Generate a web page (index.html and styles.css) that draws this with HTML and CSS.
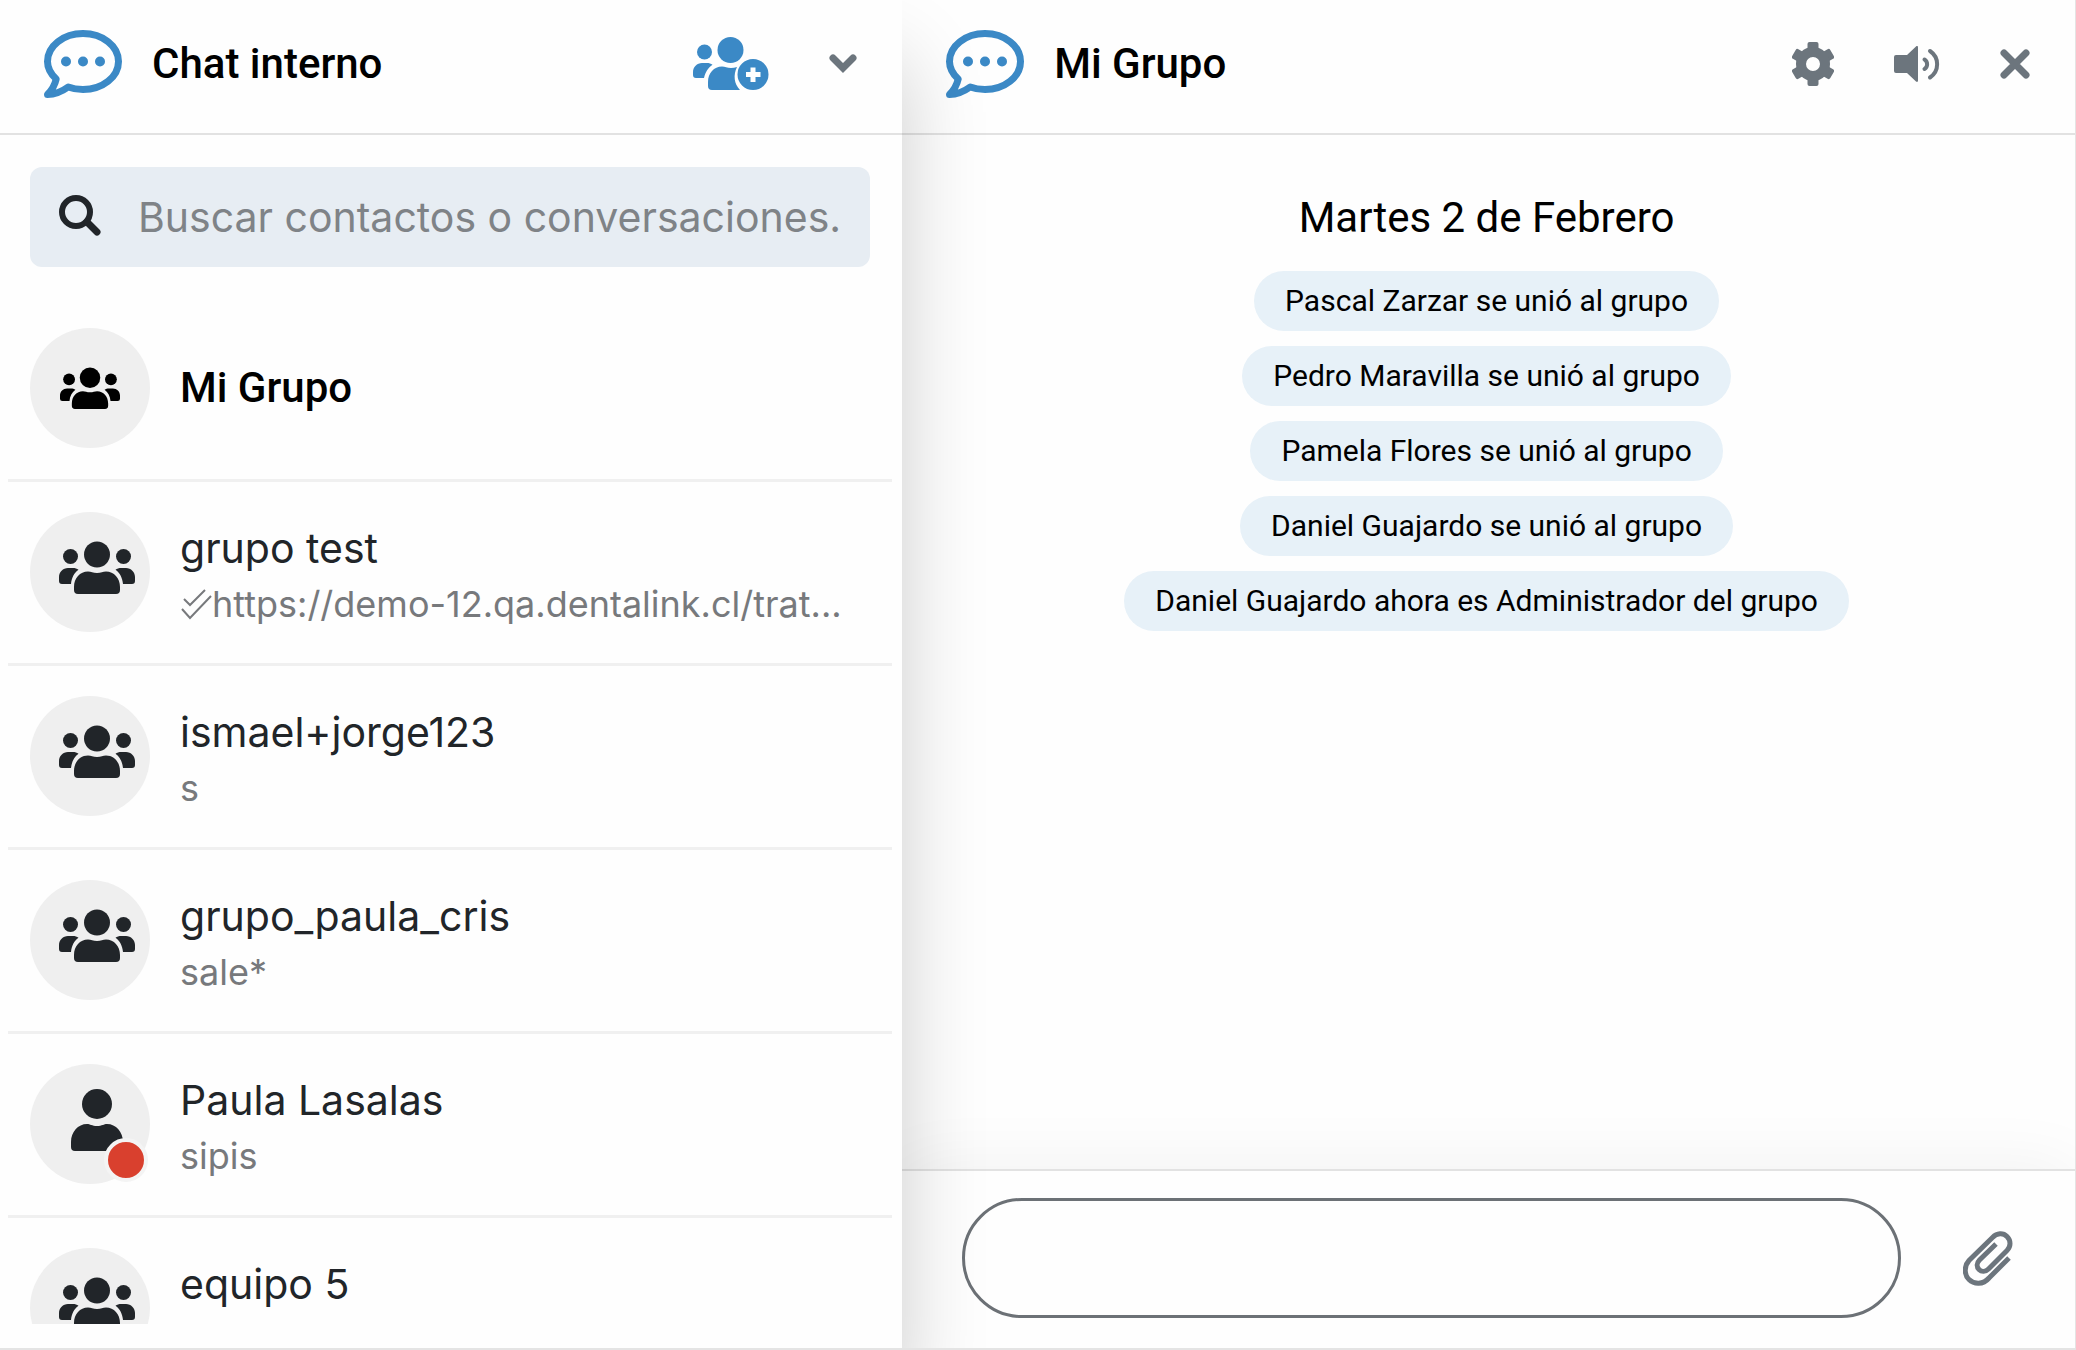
FILE: index.html
```html
<!doctype html>
<html lang="es">
	<head>
		<meta charset="UTF-8" />
		<title>Chat interno</title>
		<link rel="stylesheet" href="styles.css">
	</head>
	<body>
		<svg class="sprite" aria-hidden="true">
			<symbol id="bubble" viewBox="0 0 78 68">
				<path d="M39 3.500c19.600 0 35.500 12.500 35.500 28S58.600 59.500 39 59.500c-5.300 0-10.300-.8-14.800-2.500C18 61.500 11 64.500 3.500 64.500c5-5 7.500-10 8.700-15.500C6.800 44 3.500 38 3.500 31.500c0-15.500 15.900-28 35.500-28z" fill="none" stroke="currentColor" stroke-width="7" stroke-linejoin="round" />
				<circle cx="22" cy="31.500" r="5" />
				<circle cx="39" cy="31.500" r="5" />
				<circle cx="56" cy="31.500" r="5" />
			</symbol>
			<symbol id="group" viewBox="0 0 76 53">
				<circle cx="38" cy="13.500" r="13" />
				<circle cx="11.500" cy="15.500" r="7.500" />
				<circle cx="64.500" cy="15.500" r="7.500" />
				<path d="M15 49v-3c0-9 6-15.500 14-15.500 3 0 5 1.500 9 1.500s6-1.500 9-1.500c8 0 14 6.500 14 15.500v3a4 4 0 0 1-4 4H19a4 4 0 0 1-4-4z" />
				<path d="M0 40v-4c0-5 4-9 9-9h5c2 0 4 .6 5.500 1.800C15 32 12.600 37 12 43H3a3 3 0 0 1-3-3z" />
				<path d="M76 40v-4c0-5-4-9-9-9h-5c-2 0-4 .6-5.500 1.800C61 32 63.400 37 64 43h9a3 3 0 0 0 3-3z" />
			</symbol>
			<symbol id="user" viewBox="0 0 52 62">
				<circle cx="26" cy="15" r="15" />
				<path d="M0 58v-5c0-10 7-18 16-18 3 0 5 2 10 2s7-2 10-2c9 0 16 8 16 18v5a4 4 0 0 1-4 4H4a4 4 0 0 1-4-4z" />
			</symbol>
		</svg>

		<div class="chat">
			<section class="contacts">
				<header class="bar">
					<svg class="logo"><use href="#bubble" /></svg>
					<h1>Chat interno</h1>
					<button class="add" type="button" aria-label="Crear grupo">
						<svg width="76" height="53" viewBox="0 0 76 53">
							<circle cx="11.500" cy="15" r="7.500" />
							<circle cx="37.500" cy="13" r="13" />
							<path d="M0 38v-3c0-5 4-9 9-9h5c2 0 4 .6 5.500 1.800C15 31 12.500 35 11 41H3a3 3 0 0 1-3-3z" />
							<path d="M47 53H19a4 4 0 0 1-4-4v-4c0-9 6-15.500 14-15.500 3 0 5 1.500 9 1.500 2 0 4-.5 6-1-4 8-3 17 3 23z" />
							<path fill-rule="evenodd" d="M60 22a15.500 15.500 0 1 1 0 31 15.500 15.500 0 0 1 0-31zM57.500 30.500v4.500H53v5h4.500v5h5v-5h5v-5h-5v-4.500z" />
						</svg>
					</button>
					<button type="button" aria-label="Minimizar">
						<svg width="28" height="20" viewBox="0 0 28 20">
							<path d="M4 4l10 10L24 4" fill="none" stroke="currentColor" stroke-width="7" stroke-linecap="round" />
						</svg>
					</button>
				</header>

				<label class="search">
					<svg width="43" height="44" viewBox="0 0 43 44">
						<circle cx="17" cy="17" r="14" fill="none" stroke="currentColor" stroke-width="6" />
						<path d="M28 27l10 10" stroke="currentColor" stroke-width="7" stroke-linecap="round" />
					</svg>
					<input type="text" aria-label="Buscar" placeholder="Buscar contactos o conversaciones.">
				</label>

				<ul class="list">
					<li class="row current">
						<div class="avatar"><svg><use href="#group" /></svg></div>
						<h2>Mi Grupo</h2>
					</li>
					<li class="row">
						<div class="avatar"><svg><use href="#group" /></svg></div>
						<div class="info">
							<h3>grupo test</h3>
							<p>
								<svg class="check" width="32" height="32" viewBox="0 0 32 32">
									<path d="M4 11l6 6L25 2M2 21l8 9L31 8" fill="none" stroke="currentColor" stroke-width="2" />
								</svg>https://demo-12.qa.dentalink.cl/trat...
							</p>
						</div>
					</li>
					<li class="row">
						<div class="avatar"><svg><use href="#group" /></svg></div>
						<div class="info">
							<h3>ismael+jorge123</h3>
							<p>s</p>
						</div>
					</li>
					<li class="row">
						<div class="avatar"><svg><use href="#group" /></svg></div>
						<div class="info">
							<h3>grupo_paula_cris</h3>
							<p>sale*</p>
						</div>
					</li>
					<li class="row">
						<div class="avatar person">
							<svg><use href="#user" /></svg>
							<span class="status"></span>
						</div>
						<div class="info">
							<h3>Paula Lasalas</h3>
							<p>sipis</p>
						</div>
					</li>
					<li class="row">
						<div class="avatar"><svg><use href="#group" /></svg></div>
						<div class="info">
							<h3>equipo 5</h3>
						</div>
					</li>
				</ul>
			</section>

			<section class="room">
				<header class="bar">
					<svg class="logo"><use href="#bubble" /></svg>
					<h1>Mi Grupo</h1>
					<button type="button" aria-label="Configuración">
						<svg width="42" height="44" viewBox="-21 -22 42 44">
							<path id="tooth" d="M-5.500-14v-6a2 2 0 0 1 2-2h7a2 2 0 0 1 2 2v6z" />
							<use href="#tooth" transform="rotate(60)" />
							<use href="#tooth" transform="rotate(120)" />
							<use href="#tooth" transform="rotate(180)" />
							<use href="#tooth" transform="rotate(240)" />
							<use href="#tooth" transform="rotate(300)" />
							<circle r="12" fill="none" stroke="currentColor" stroke-width="10" />
						</svg>
					</button>
					<button type="button" aria-label="Sonido">
						<svg width="46" height="36" viewBox="0 0 46 36">
							<path d="M2 9h11L22 .5c1-.8 2-.5 2 1v33c0 1.500-1 1.800-2 1L13 27H2a2 2 0 0 1-2-2V11a2 2 0 0 1 2-2z" />
							<path d="M30.500 13.500c3.500 2 3.500 7.500 0 9.500M36 5c9.500 6.500 9.500 20 0 26.500" fill="none" stroke="currentColor" stroke-width="4" stroke-linecap="round" />
						</svg>
					</button>
					<button type="button" aria-label="Cerrar">
						<svg width="30" height="30" viewBox="0 0 30 30">
							<path d="M4 4l22 22M26 4L4 26" stroke="currentColor" stroke-width="7" stroke-linecap="round" />
						</svg>
					</button>
				</header>

				<div class="messages">
					<h2>Martes 2 de Febrero</h2>
					<p>Pascal Zarzar se unió al grupo</p>
					<p>Pedro Maravilla se unió al grupo</p>
					<p>Pamela Flores se unió al grupo</p>
					<p>Daniel Guajardo se unió al grupo</p>
					<p>Daniel Guajardo ahora es Administrador del grupo</p>
				</div>

				<form class="composer">
					<input type="text" aria-label="Mensaje">
					<button type="button" aria-label="Adjuntar archivo">
						<svg width="50" height="55" viewBox="0 0 50 55">
							<path d="M46 27L26 47C20 54 11 53.500 6 48.500S1 35 6 29.500L29.500 6.500C34 2 40 1.500 44 5.500s4 10 0 14L25.500 38c-3 3-7 3-9.500.5s-2.500-6.500.5-9.500L33 13" fill="none" stroke="currentColor" stroke-width="5" />
						</svg>
					</button>
				</form>
			</section>
		</div>
	</body>
</html>
```
FILE: styles.css
```css
* {
	margin: 0;
	padding: 0;
	box-sizing: border-box;
}
body {
	font-family: Roboto, sans-serif;
	color: #000;
	background: #fefefe;
}
svg {
	display: block;
	fill: currentColor;
	flex: none;
}
button {
	border: none;
	background: none;
	color: #6c757d;
	cursor: pointer;
}
input {
	outline: none;
	min-width: 0;
}
.sprite {
	position: absolute;
	width: 0;
	height: 0;
}
.chat {
	height: 100vh;
	display: grid;
	grid-template-columns: 10fr 13fr;
	border-right: 1px solid #e4e4e4;
	border-bottom: 2px solid #e4e4e4;
	overflow: hidden;
}
.contacts,
.room {
	display: flex;
	flex-direction: column;
	min-width: 0;
	min-height: 0;
}
.contacts {
	position: relative;
	z-index: 2;
	background: #fefefe;
	box-shadow: 0 60px 80px rgba(0, 0, 0, 0.2);
	padding-bottom: 24px;
}

/* barra superior */
.bar {
	flex: none;
	display: flex;
	align-items: center;
	gap: 60px;
	height: 135px;
	padding: 0 45px 6px 44px;
	border-bottom: 2px solid #e2e2e2;
}
.bar h1 {
	flex: 1;
	margin-left: -30px;
	font-size: 42px;
	line-height: 50px;
	font-weight: 500;
}
.logo {
	width: 78px;
	height: 68px;
	color: #3b89c6;
}
.bar .add {
	color: #3b89c6;
}

/* buscador */
.search {
	flex: none;
	display: flex;
	align-items: center;
	gap: 36px;
	height: 100px;
	margin: 32px 32px 0 30px;
	padding: 0 20px 0 29px;
	border-radius: 12px;
	background: #e7edf3;
	color: #212529;
}
.search input {
	flex: 1;
	border: none;
	background: none;
	font-family: Inter, sans-serif;
	font-size: 41px;
}
.search input::placeholder {
	color: #7f8387;
	opacity: 1;
}

/* lista de conversaciones */
.list {
	flex: 1;
	min-height: 0;
	margin: 31px 10px 0 8px;
	overflow: hidden;
	list-style: none;
}
.row {
	display: flex;
	gap: 30px;
	height: 184px;
	padding: 30px 22px;
	border-bottom: 3px solid #f0f0f0;
	color: #212529;
}
.row.current {
	color: #000;
}
.row h2 {
	font-size: 42px;
	line-height: 120px;
	font-weight: 500;
}
.avatar {
	position: relative;
	flex: none;
	width: 120px;
	height: 120px;
	padding: 29px;
	border-radius: 50%;
	background: #efefef;
}
.avatar svg {
	width: 76px;
	height: 53px;
}
.current .avatar {
	padding: 39px 30px;
}
.current .avatar svg {
	width: 60px;
	height: 42px;
}
.person {
	padding: 25px 41px;
}
.person svg {
	width: 52px;
	height: 62px;
}
.status {
	position: absolute;
	right: 2px;
	bottom: 2px;
	width: 44px;
	height: 44px;
	border: 4px solid #f4f4f4;
	border-radius: 50%;
	background: #d9402e;
}
.info {
	min-width: 0;
	padding-top: 8px;
	font-family: Inter, sans-serif;
	white-space: nowrap;
}
.info h3 {
	font-size: 41px;
	line-height: 56px;
	font-weight: 400;
}
.info p {
	display: flex;
	align-items: center;
	font-size: 36px;
	line-height: 56px;
	color: #77797c;
}

/* mensajes */
.messages {
	flex: 1;
	display: flex;
	flex-direction: column;
	align-items: center;
	gap: 15px;
	padding: 58px 4px 0 0;
}
.messages h2 {
	margin-bottom: 13px;
	font-size: 42px;
	line-height: 50px;
	font-weight: 400;
}
.messages p {
	padding: 0 31px;
	border-radius: 30px;
	background: #e7f1f8;
	font-size: 30px;
	line-height: 60px;
}
.composer {
	position: relative;
	display: flex;
	align-items: center;
	gap: 62px;
	padding: 27px 62px 30px 60px;
	border-top: 2px solid #e2e2e2;
	background: #fefefe;
	box-shadow: 0 0 70px rgba(0, 0, 0, 0.06);
}
.composer input {
	flex: 1;
	height: 120px;
	padding: 0 48px;
	border: 3px solid #6c7176;
	border-radius: 60px;
	background: #fefefe;
	font-family: Roboto, sans-serif;
	font-size: 30px;
}
```
